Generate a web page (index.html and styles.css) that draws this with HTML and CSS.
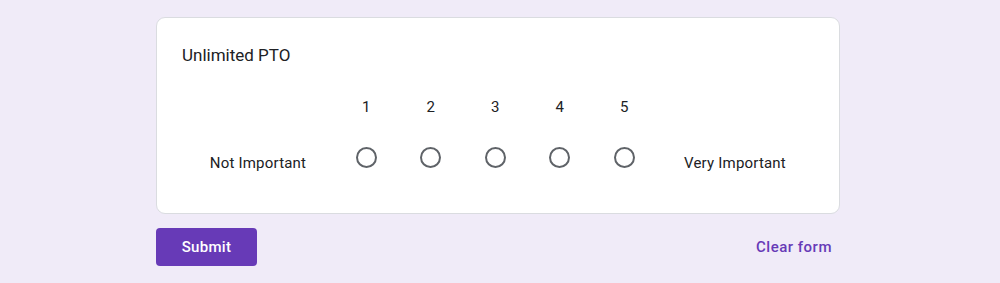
FILE: index.html
```html
<!DOCTYPE html>
<html>
<head>
<meta charset="utf-8">
<link rel="stylesheet" href="styles.css">
</head>
<body>
<div class="wrap">
  <div class="card">
    <div class="title">Unlimited PTO</div>
    <div class="scale">
      <div class="cell"></div>
      <div class="num">1</div>
      <div class="num">2</div>
      <div class="num">3</div>
      <div class="num">4</div>
      <div class="num">5</div>
      <div class="cell"></div>
      <div class="label">Not Important</div>
      <div class="radio-cell"><span class="radio"></span></div>
      <div class="radio-cell"><span class="radio"></span></div>
      <div class="radio-cell"><span class="radio"></span></div>
      <div class="radio-cell"><span class="radio"></span></div>
      <div class="radio-cell"><span class="radio"></span></div>
      <div class="label">Very Important</div>
    </div>
  </div>
  <div class="actions">
    <button class="submit">Submit</button>
    <button class="clear">Clear form</button>
  </div>
</div>
</body>
</html>
```
FILE: styles.css
```css
html, body {
  margin: 0;
  padding: 0;
  background: #f0ebf8;
  font-family: Roboto, "Liberation Sans", Arial, sans-serif;
  color: #202124;
}
.wrap {
  width: 684px;
  margin-left: 156px;
  padding-top: 17px;
}
.card {
  background: #fff;
  border: 1px solid #dadce0;
  border-radius: 9px;
  padding: 24px 25px 36px 25px;
}
.title {
  font-size: 17px;
  line-height: 26px;
  letter-spacing: 0;
}
.scale {
  margin-top: 29px;
  display: grid;
  grid-template-columns: 152px repeat(5, 64.5px) 157px;
  grid-template-rows: 20px 40px;
  row-gap: 20px;
}
.num {
  font-size: 15px;
  line-height: 20px;
  text-align: center;
  letter-spacing: .2px;
}
.label {
  font-size: 15px;
  line-height: 20px;
  text-align: center;
  letter-spacing: .2px;
  align-self: end;
  padding-bottom: 4px;
}
.radio-cell {
  display: flex;
  align-items: center;
  justify-content: center;
}
.radio {
  display: block;
  width: 17px;
  height: 17px;
  border: 2px solid #5f6368;
  border-radius: 50%;
}
.actions {
  margin-top: 14px;
  display: flex;
  justify-content: space-between;
  align-items: center;
}
.submit {
  width: 101px;
  height: 38px;
  border: none;
  border-radius: 4px;
  background: #673ab7;
  color: #fff;
  font-family: Roboto, "Liberation Sans", Arial, sans-serif;
  font-weight: 500;
  font-size: 15px;
  letter-spacing: .3px;
  padding: 0;
}
.clear {
  height: 38px;
  border: none;
  background: transparent;
  color: #673ab7;
  font-family: Roboto, "Liberation Sans", Arial, sans-serif;
  font-weight: 500;
  font-size: 15px;
  letter-spacing: .5px;
  padding: 0 8px;
}
```
